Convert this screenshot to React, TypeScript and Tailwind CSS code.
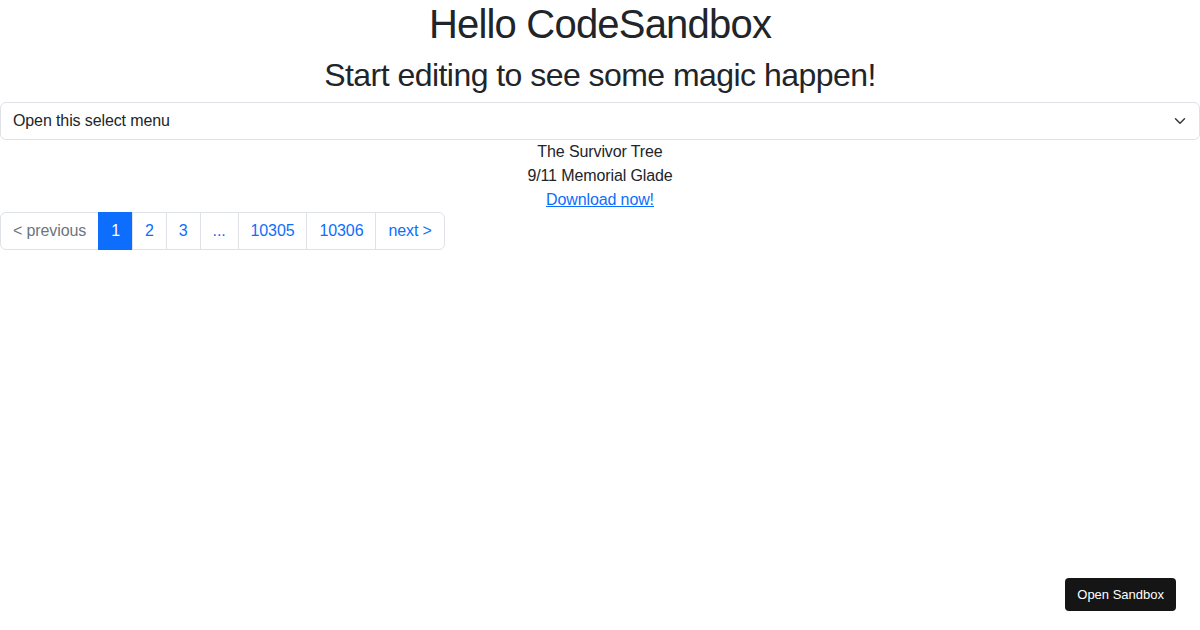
const pages = [
    { label: '1', active: true },
    { label: '2' },
    { label: '3' },
    { label: '...' },
    { label: '10305' },
    { label: '10306' },
    { label: 'next >' },
];

export default function App() {
    return (
        <div className="min-h-[630px] bg-white text-[#212529] text-base leading-6 tracking-[-0.007em] font-['Liberation_Sans',Arial,sans-serif]">
            <div className="text-center">
                <h1 className="text-[40px] leading-[1.2] font-medium mb-2 tracking-[-0.02em]">Hello CodeSandbox</h1>
                <h2 className="text-[32px] leading-[1.2] font-medium mb-2 tracking-[-0.017em]">Start editing to see some magic happen!</h2>
            </div>

            <div className="relative">
                <div className="flex items-center h-[38px] border border-[#dee2e6] rounded-md pl-3 pr-9">
                    Open this select menu
                </div>
                <svg
                    className="absolute right-3 top-[13px] w-4 h-3"
                    viewBox="0 0 16 16"
                    fill="none"
                    stroke="#343a40"
                    strokeWidth="2"
                    strokeLinecap="round"
                    strokeLinejoin="round"
                >
                    <path d="m2 5 6 6 6-6" />
                </svg>
            </div>

            <div className="text-center">
                <p>The Survivor Tree</p>
                <p>9/11 Memorial Glade</p>
                <a href="#" className="text-[#0d6efd] underline">Download now!</a>
            </div>

            <ul className="flex">
                <li className="px-3 py-1.5 border border-[#dee2e6] rounded-l-md text-[#6c757d]">&lt; previous</li>
                {pages.map((p, i) => (
                    <li
                        key={i}
                        className={`px-3 py-1.5 border -ml-px ${
                            p.active
                                ? 'bg-[#0d6efd] border-[#0d6efd] text-white'
                                : 'border-[#dee2e6] text-[#0d6efd]'
                        } ${i === pages.length - 1 ? 'rounded-r-md' : ''}`}
                    >
                        {p.label}
                    </li>
                ))}
            </ul>

            <button className="fixed right-6 bottom-[19px] h-[33px] px-3 rounded bg-[#151515] text-white text-[13px] tracking-normal">
                Open Sandbox
            </button>
        </div>
    );
}
